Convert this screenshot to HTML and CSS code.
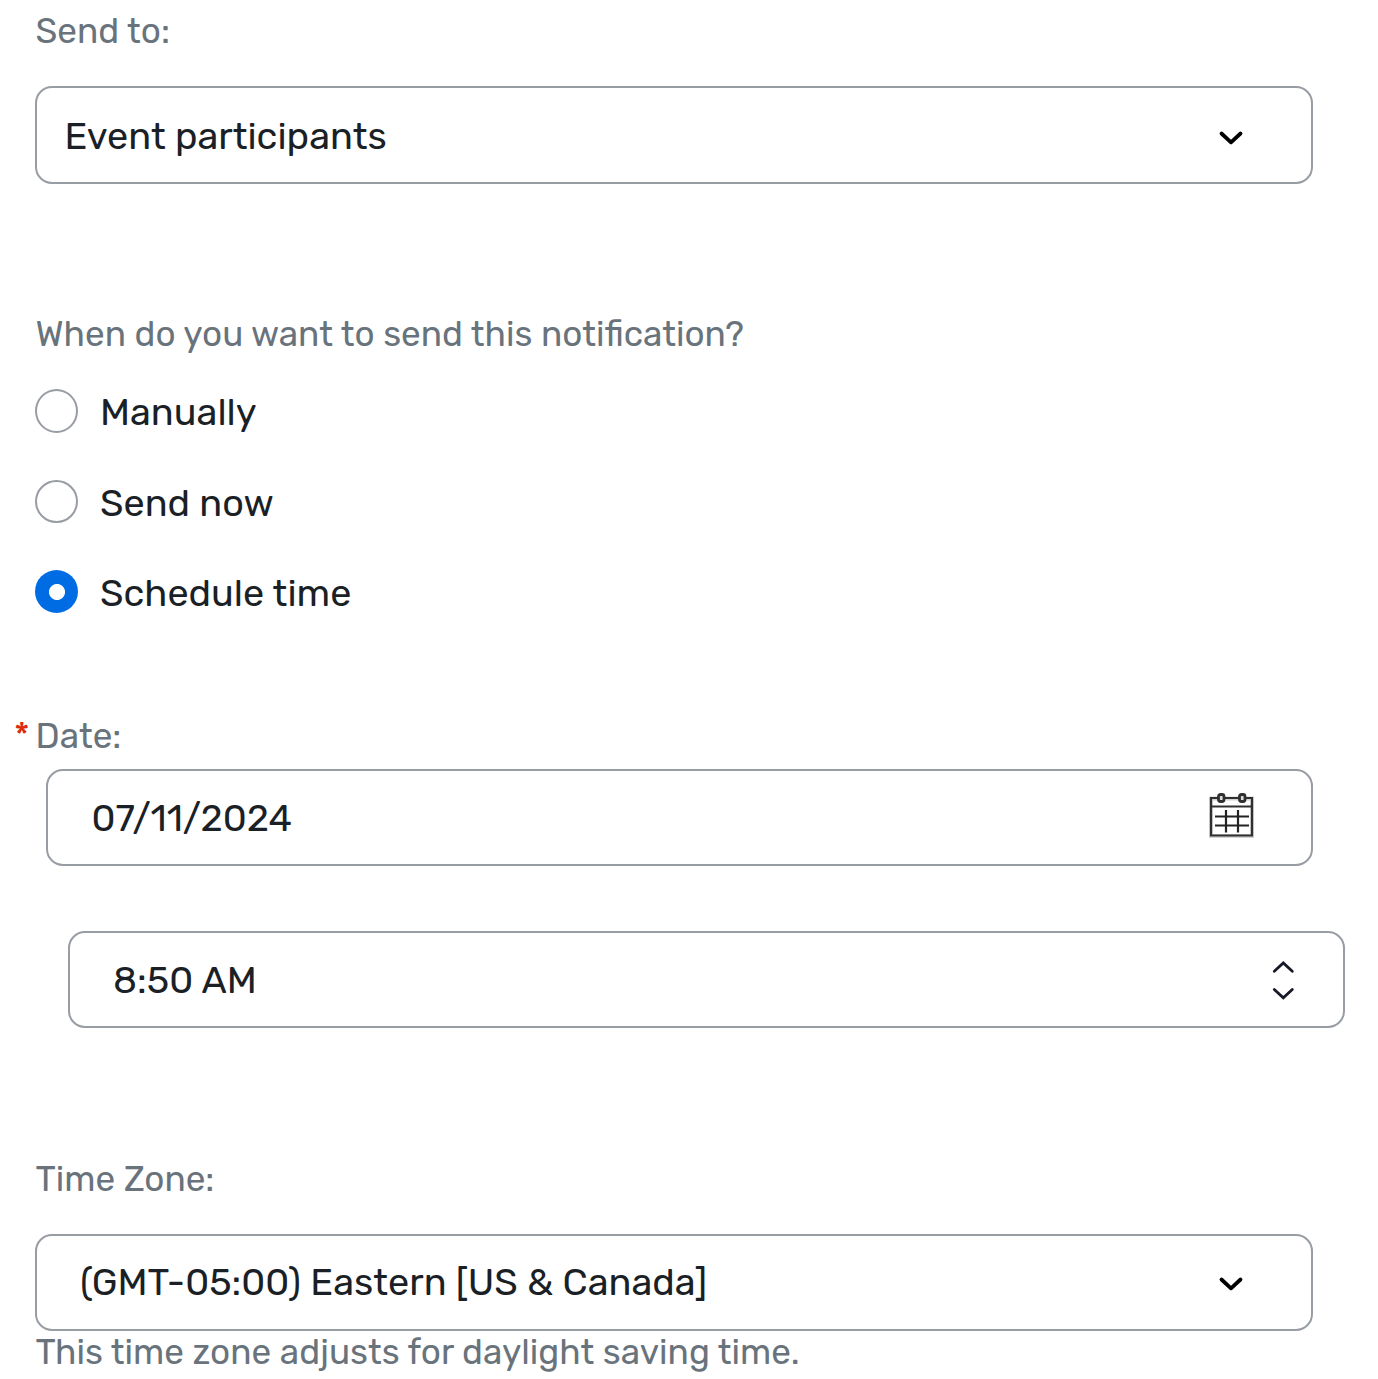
FILE: index.html
```html
<!DOCTYPE html>
<html lang="en">
<head>
<meta charset="utf-8">
<title>Notification schedule</title>
<link rel="stylesheet" href="styles.css">
</head>
<body>
<form class="form">
  <section class="group group-recipients">
    <label class="label">Send to:</label>
    <div class="field field-select">
      <span class="value">Event participants</span>
      <svg class="chevron" width="26" height="16" viewBox="0 0 26 16"><path d="M3.500 3.500 13 12.300 22.500 3.500"/></svg>
    </div>
  </section>

  <section class="group group-when">
    <div class="label">When do you want to send this notification?</div>
    <div class="radios">
      <label class="option"><span class="radio radio-tall"></span><span class="option-text">Manually</span></label>
      <label class="option"><span class="radio"></span><span class="option-text">Send now</span></label>
      <label class="option"><span class="radio radio-on"></span><span class="option-text">Schedule time</span></label>
    </div>
  </section>

  <section class="group group-date">
    <div class="label-row"><span class="required">*</span><label class="label label-date">Date:</label></div>
    <div class="field field-date">
      <span class="value">07/11/2024</span>
      <svg class="calendar" width="46" height="48" viewBox="0 0 46 48">
        <path class="halo" d="M3 6.500H44V44H3Z"/>
        <path d="M3 6H44V43.500H3ZM3 14.500H44"/>
        <path class="grid" d="M7 24.500H41M7 33.500H41M18 18V40.500M30 18V40.500"/>
        <rect class="ring" x="10.500" y="2.500" width="5.500" height="7" rx="2"/>
        <rect class="ring" x="31.500" y="2.500" width="5.500" height="7" rx="2"/>
      </svg>
    </div>
    <div class="field field-time">
      <span class="value">8:50 AM</span>
      <svg class="stepper" width="24" height="42" viewBox="0 0 24 42"><path d="M3.300 12.300 12.300 4 21.300 12.300M3.300 30.500 12.300 38.800 21.300 30.500"/></svg>
    </div>
  </section>

  <section class="group group-zone">
    <label class="label">Time Zone:</label>
    <div class="field field-select field-zone">
      <span class="value">(GMT-05:00) Eastern [US &amp; Canada]</span>
      <svg class="chevron" width="26" height="16" viewBox="0 0 26 16"><path d="M3.500 3.500 13 12.300 22.500 3.500"/></svg>
    </div>
    <div class="label">This time zone adjusts for daylight saving time.</div>
  </section>
</form>
</body>
</html>
```
FILE: styles.css
```css
* { box-sizing: border-box; }
body { margin: 0; background: #fff; color: #1b1f26; font-family: Rubik, Roboto, "Liberation Sans", sans-serif; font-size: 37.800px; overflow: hidden; }
.form { height: 1379px; padding: 10px 65px 0 35px; display: flex; flex-direction: column; }
.group { display: flex; flex-direction: column; }
.label { font-size: 35.120px; line-height: 42px; height: 42px; padding-left: 0.500px; color: #69737c; white-space: nowrap; }
.field { display: flex; align-items: center; justify-content: space-between; height: 97px; border: 2px solid #989ca3; border-radius: 17px; background: #fff; }
.value { line-height: 44px; white-space: nowrap; }
.field-select { margin-top: 34px; padding: 0 67px 0 28px; }
.group-recipients .field { height: 98px; padding-left: 27.500px; }
.group-recipients .value { padding-top: 2px; }
.chevron, .stepper, .calendar { flex: none; fill: none; }
.chevron { stroke: #000; stroke-width: 3.800; stroke-linecap: round; stroke-linejoin: round; margin-top: 5px; }

.group-when { margin-top: 129px; }
.radios { display: flex; flex-direction: column; gap: 47px; margin-top: 34px; }
.option { display: flex; align-items: center; gap: 22px; height: 43px; }
.option:first-child { height: 44px; }
.radio { width: 43px; height: 43px; border: 2px solid #989ca3; border-radius: 50%; }
.radio-tall { height: 44px; }
.radio-on { border: 0; background: radial-gradient(circle at 22px 22px, #fff 0 7.600px, #006ce4 8.400px); }
.option-text { line-height: 43px; padding-top: 3px; white-space: nowrap; }

.group-date { margin-top: 102px; }
.label-row { display: flex; height: 42px; margin-left: -21px; }
.required { width: 22px; line-height: 42px; font-size: 35.100px; font-weight: 400; color: #dc2c10; }
.label-date { padding-left: 0; margin-left: -0.500px; }
.field-date { margin: 12px 0 0 11px; padding: 0 57px 0 43.500px; }
.field-time { margin: 65px -32px 0 33px; padding: 0 48px 0 43px; }
.calendar { stroke: #303030; stroke-width: 2.200; margin-top: -3px; }
.calendar .halo { stroke: #d4d4d4; stroke-width: 4; }
.calendar .grid { stroke: #222; }
.calendar .ring { fill: #ddd; stroke-width: 2.800; }
.stepper { stroke: #151a26; stroke-width: 2.800; stroke-linecap: round; stroke-linejoin: miter; margin-top: 1px; }

.group-zone { margin-top: 130px; }
.field-zone { padding-left: 43px; }
.field-zone .value { margin-top: -1px; }
.field-zone .chevron { margin-top: 3px; }
```
